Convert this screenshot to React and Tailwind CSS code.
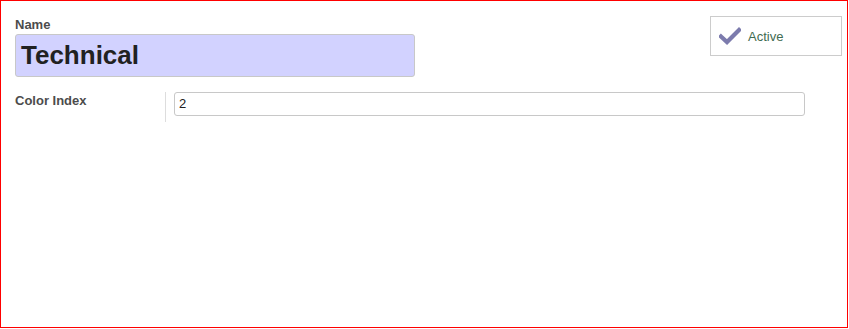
import React from 'react';

function CheckIcon() {
  return (
    <svg width="22" height="18" viewBox="0 0 22 18" className="shrink-0">
      <path d="M2 9.5 L8 15 L20 3" fill="none" stroke="#7c7bad" strokeWidth="4.2" strokeLinecap="square" />
    </svg>
  );
}

export default function App() {
  return (
    <div className="w-[848px] h-[328px] border border-[#ff0000] bg-white font-['Liberation_Sans',Arial,sans-serif] text-[13px] text-[#4c4c4c]">
      <div className="flex justify-between pl-[14px] pr-[5px] pt-[15px]">
        <div className="flex flex-col">
          <label className="font-bold leading-[18px]">Name</label>
          <div className="w-[400px] h-[43px] rounded-[3px] border border-[#c8c8c8] bg-[#d2d2ff] flex items-center pl-[5px]">
            <span className="text-[26px] font-bold text-[#212121] leading-none mt-[-2px]">Technical</span>
          </div>
        </div>
        <div className="w-[132px] h-[40px] border border-[#cccccc] flex items-center gap-[7px] pl-[8px]">
          <CheckIcon />
          <span className="text-[#3f6b52] mt-[1px]">Active</span>
        </div>
      </div>
      <div className="flex pl-[14px] pt-[15px]">
        <label className="w-[150px] font-bold leading-[18px]">Color Index</label>
        <div className="border-l border-[#dddddd] pl-[8px] h-[30px]">
          <div className="w-[631px] h-[24px] rounded-[3px] border border-[#c8c8c8] flex items-center pl-[4px] text-[#212121]">
            2
          </div>
        </div>
      </div>
    </div>
  );
}
